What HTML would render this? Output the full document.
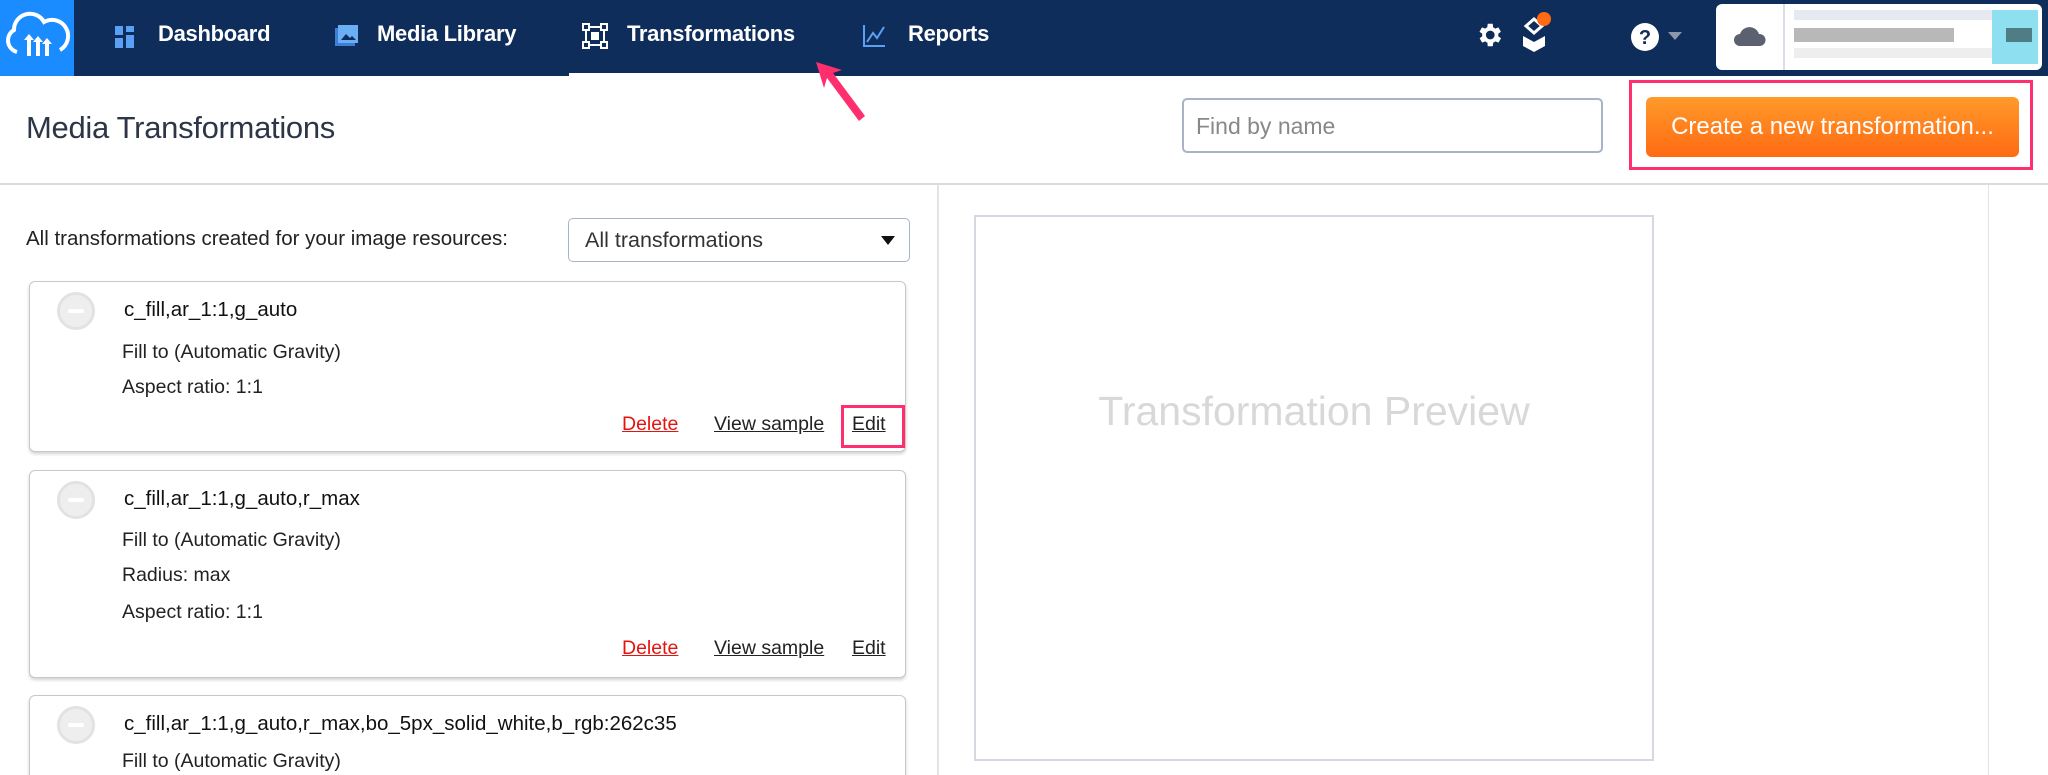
<!DOCTYPE html>
<html><head><meta charset="utf-8"><style>
*{box-sizing:border-box;margin:0;padding:0}
html{width:2048px;height:775px;overflow:hidden}
body{width:2048px;height:775px;overflow:hidden;background:#fff;font-family:"Liberation Sans",sans-serif;position:relative;color:#222}
.nav{position:absolute;left:0;top:0;width:2048px;height:76px;background:#0f2d5a}
.logo{position:absolute;left:0;top:0;width:74px;height:76px;background:#1a8cff}
.ni{position:absolute;top:0;height:76px;line-height:68px;color:#fff;font-size:22px;font-weight:bold;letter-spacing:-0.3px}
.abs{position:absolute}
.card{position:absolute;left:29px;width:877px;border:1px solid #c8c8c8;border-radius:6px;box-shadow:0 2px 3px rgba(0,0,0,.18);background:#fff}
.t{position:absolute;font-size:20.5px;color:#111}
.l{position:absolute;font-size:19.5px;color:#222}
.lk{position:absolute;font-size:19.5px;text-decoration:underline;color:#222}
.circ{position:absolute;width:38px;height:38px;border-radius:50%;background:#eee;border:3px solid #e2e2e2}
.circ:after{content:"";position:absolute;left:8px;top:14px;width:16px;height:4px;background:#fff;border-radius:2px}
</style></head><body>
<div class="nav">
 <div class="logo"><svg width="74" height="76" viewBox="0 0 74 76"><path d="M17 52 A12 12 0 0 1 14 30 A16 16 0 0 1 44 22 A14 14 0 0 1 60 50" fill="none" stroke="#fff" stroke-width="4"/><g fill="#fff"><path d="M24 40l5-6 5 6h-3v16h-4V40z"/><path d="M33 42l5-6 5 6h-3v14h-4V42z"/><path d="M42 44l5-6 5 6h-3v12h-4V44z"/></g></svg></div>
 <svg class="abs" style="left:115px;top:26px" width="20" height="22"><rect x="0" y="0" width="8" height="9" fill="#5aa0f5"/><rect x="0" y="12" width="8" height="10" fill="#5aa0f5"/><rect x="11" y="0" width="8" height="6" fill="#5aa0f5"/><rect x="11" y="9" width="8" height="13" fill="#5aa0f5"/></svg>
 <div class="ni" style="left:158px">Dashboard</div>
 <svg class="abs" style="left:335px;top:24px" width="24" height="24"><rect x="0" y="4" width="20" height="18" fill="#3d7fd4"/><rect x="3" y="1" width="20" height="18" fill="#6aaef5"/><path d="M6 16l5-6 4 4 2-2 4 4z" fill="#0f2d5a"/></svg>
 <div class="ni" style="left:377px">Media Library</div>
 <svg class="abs" style="left:582px;top:23px" width="26" height="26"><rect x="4" y="4" width="18" height="18" fill="none" stroke="#fff" stroke-width="2"/><rect x="1" y="1" width="6" height="6" fill="#0f2d5a" stroke="#fff" stroke-width="2"/><rect x="19" y="1" width="6" height="6" fill="#0f2d5a" stroke="#fff" stroke-width="2"/><rect x="1" y="19" width="6" height="6" fill="#0f2d5a" stroke="#fff" stroke-width="2"/><rect x="19" y="19" width="6" height="6" fill="#0f2d5a" stroke="#fff" stroke-width="2"/><rect x="9" y="9" width="8" height="8" fill="#fff"/></svg>
 <div class="ni" style="left:627px">Transformations</div>
 <div class="abs" style="left:569px;top:73px;width:262px;height:3px;background:#fff"></div>
 <svg class="abs" style="left:862px;top:24px" width="24" height="24"><path d="M2 1v21h21" fill="none" stroke="#5aa0f5" stroke-width="2"/><path d="M5 18l6-9 4 5 7-11" fill="none" stroke="#5aa0f5" stroke-width="2"/></svg>
 <div class="ni" style="left:908px">Reports</div>
 <svg class="abs" style="left:1474px;top:20px" width="30" height="30" viewBox="0 0 24 24"><path fill="#fff" d="M19.4 13a7.5 7.5 0 0 0 0-2l2.1-1.6-2-3.5-2.5 1a7 7 0 0 0-1.7-1L15 3h-4l-.4 2.9a7 7 0 0 0-1.7 1l-2.5-1-2 3.5L6.6 11a7.5 7.5 0 0 0 0 2l-2.1 1.6 2 3.5 2.5-1a7 7 0 0 0 1.7 1L11 21h4l.4-2.9a7 7 0 0 0 1.7-1l2.5 1 2-3.5zM13 15.5a3.5 3.5 0 1 1 0-7 3.5 3.5 0 0 1 0 7z"/></svg>
 <svg class="abs" style="left:1518px;top:10px" width="36" height="44"><path d="M8 16l8-7 8 7-8 7z" fill="none" stroke="#fff" stroke-width="3"/><path d="M5 26l11 6 11-6v10l-11 6-11-6z" fill="#fff"/><circle cx="26" cy="9" r="7" fill="#ff6a13"/></svg>
 <svg class="abs" style="left:1630px;top:22px" width="30" height="30"><circle cx="15" cy="15" r="14" fill="#fff"/><text x="15" y="22" font-family="Liberation Sans" font-weight="bold" font-size="20" text-anchor="middle" fill="#0f2d5a">?</text></svg>
 <svg class="abs" style="left:1668px;top:32px" width="14" height="9"><path d="M0 0h14L7 8z" fill="#8a97ad"/></svg>
 <div class="abs" style="left:1716px;top:4px;width:326px;height:66px;background:#fff;border-radius:6px;overflow:hidden">
  <svg class="abs" style="left:18px;top:20px" width="32" height="24"><path d="M6 22a6 6 0 0 1 0-12 10 10 0 0 1 19 0 6 6 0 0 1 1 12z" fill="#5b6170"/></svg>
  <div class="abs" style="left:67px;top:0;width:2px;height:66px;background:#d8dde6"></div>
  <div class="abs" style="left:78px;top:6px;width:240px;height:10px;background:#e6e9ef"></div>
  <div class="abs" style="left:78px;top:24px;width:160px;height:14px;background:#b8b8b8"></div>
  <div class="abs" style="left:78px;top:44px;width:200px;height:10px;background:#eeeeee"></div>
  <div class="abs" style="left:276px;top:6px;width:46px;height:54px;background:#8ee0f0"></div>
  <div class="abs" style="left:290px;top:24px;width:26px;height:14px;background:#4f7d86"></div>
 </div>
</div>
<div class="abs" style="left:26px;top:110px;font-size:31px;color:#2d3646;letter-spacing:-0.3px">Media Transformations</div>
<div class="abs" style="left:1182px;top:98px;width:421px;height:55px;border:2px solid #a8b4c6;border-radius:5px;font-size:23px;color:#888;padding:13px 12px">Find by name</div>
<div class="abs" style="left:1629px;top:80px;width:404px;height:90px;border:3px solid #ff2e6e"></div>
<div class="abs" style="left:1646px;top:97px;width:373px;height:60px;border-radius:6px;background:linear-gradient(#ff9a2a,#ff6a13);color:#fff;font-size:24px;text-align:center;line-height:60px">Create a new transformation...</div>
<svg class="abs" style="left:800px;top:52px" width="80" height="80"><path d="M16 10l26 8-9 3 32 43-6 5-32-43-3 10z" fill="#ff2e6e"/></svg>
<div class="abs" style="left:0;top:183px;width:2048px;height:2px;background:#dcdcdc"></div>
<div class="abs" style="left:937px;top:185px;width:2px;height:590px;background:#e4e4e4"></div>
<div class="abs" style="left:1988px;top:185px;width:1px;height:590px;background:#e4e4e4"></div>
<div class="abs" style="left:26px;top:227px;font-size:20.5px;color:#222">All transformations created for your image resources:</div>
<div class="abs" style="left:568px;top:218px;width:342px;height:44px;border:1px solid #a8b4c6;border-radius:5px;font-size:21.5px;color:#333;padding:9px 16px">All transformations<svg style="position:absolute;right:14px;top:17px" width="14" height="9"><path d="M0 0h14L7 9z" fill="#111"/></svg></div>

<div class="card" style="top:281px;height:171px"></div>
<div class="circ" style="left:57px;top:292px"></div>
<div class="t" style="left:124px;top:298px">c_fill,ar_1:1,g_auto</div>
<div class="l" style="left:122px;top:341px">Fill to (Automatic Gravity)</div>
<div class="l" style="left:122px;top:376px">Aspect ratio: 1:1</div>
<div class="lk" style="left:622px;top:413px;color:#e3140f">Delete</div>
<div class="lk" style="left:714px;top:413px">View sample</div>
<div class="lk" style="left:852px;top:413px">Edit</div>
<div class="abs" style="left:841px;top:405px;width:64px;height:43px;border:3px solid #ff2e6e"></div>

<div class="card" style="top:470px;height:208px"></div>
<div class="circ" style="left:57px;top:481px"></div>
<div class="t" style="left:124px;top:487px">c_fill,ar_1:1,g_auto,r_max</div>
<div class="l" style="left:122px;top:529px">Fill to (Automatic Gravity)</div>
<div class="l" style="left:122px;top:564px">Radius: max</div>
<div class="l" style="left:122px;top:601px">Aspect ratio: 1:1</div>
<div class="lk" style="left:622px;top:637px;color:#e3140f">Delete</div>
<div class="lk" style="left:714px;top:637px">View sample</div>
<div class="lk" style="left:852px;top:637px">Edit</div>

<div class="card" style="top:695px;height:100px"></div>
<div class="circ" style="left:57px;top:706px"></div>
<div class="t" style="left:124px;top:712px">c_fill,ar_1:1,g_auto,r_max,bo_5px_solid_white,b_rgb:262c35</div>
<div class="l" style="left:122px;top:750px">Fill to (Automatic Gravity)</div>

<div class="abs" style="left:974px;top:215px;width:680px;height:546px;border:2px solid #d4d8e0;background:#fff"></div>
<div class="abs" style="left:974px;top:388px;width:680px;text-align:center;font-size:41px;color:#d8d8d8">Transformation Preview</div>
</body></html>
